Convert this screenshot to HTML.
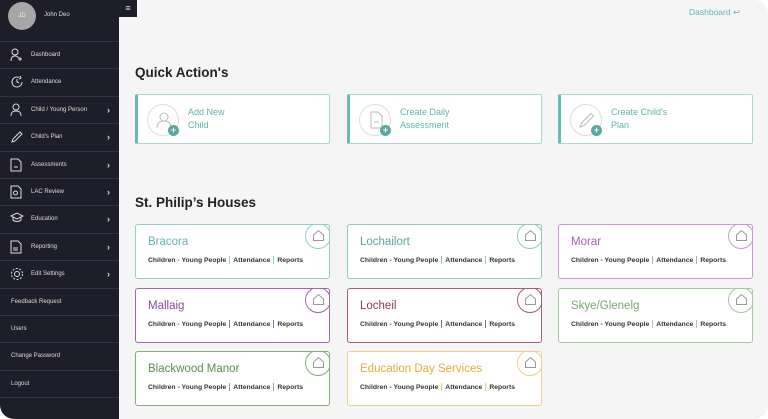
<!DOCTYPE html>
<html><head><meta charset="utf-8"><style>
*{margin:0;padding:0;box-sizing:border-box}
body{width:768px;height:419px;background:#fff;font-family:"Liberation Sans",sans-serif;position:relative;overflow:hidden}
.sb{position:absolute;left:0;top:0;width:119px;height:419px;background:#1e1d2a;border-radius:0 0 0 14px}
.tab{position:absolute;left:119px;top:0;width:18px;height:17px;background:#1e1d2a;color:#ddd;font-size:9px;text-align:center;line-height:16px}
.main{position:absolute;left:119px;top:0;width:649px;height:419px;background:#f5f5f5;border-radius:0 14px 14px 0}
.av{position:absolute;left:8px;top:2px;width:28px;height:28px;border-radius:50%;background:#a6a6a6;color:#eee;font-size:6px;text-align:center;line-height:28px}
.nm{position:absolute;left:44px;top:12px;color:#ddd;font-size:6px}
.it{position:absolute;left:0;width:119px;height:27.4px;border-top:1px solid #34334a;color:#ddd;font-size:6px;line-height:27px}
.it .t{position:absolute;left:31px}
.it .p{position:absolute;left:11px}
.it .c{position:absolute;right:9px;font-size:9px;font-weight:bold}
.it svg{position:absolute;left:10px;top:6px}
h2{position:absolute;left:135px;font-size:13.5px;font-weight:bold;color:#222}
.qa{position:absolute;width:195px;height:50px;background:#fff;border:1px solid #a9d8d3;border-left:3px solid #6bbab2;border-radius:2px}
.qa .ic{position:absolute;left:9px;top:9px;width:32px;height:32px;border-radius:50%;border:1px solid #ddd}
.qa .ic svg{position:absolute;left:7px;top:6px}
.qa .pl{position:absolute;left:30px;top:30px;width:11px;height:11px;border-radius:50%;background:#5aa9a1;color:#fff;font-size:9px;line-height:11px;text-align:center;font-weight:bold}
.qa .tx{position:absolute;left:50px;top:11px;color:#5fb5ad;font-size:9px;line-height:13px}
.hc{position:absolute;width:195px;height:55px;background:#fff;border:1px solid;border-radius:3px;overflow:hidden}
.hc .n{position:absolute;left:12px;top:11px;font-size:11.5px}
.hc .l{position:absolute;left:12px;top:31px;font-size:6.8px;font-weight:bold;color:#333;white-space:nowrap}
.hc .l i{font-style:normal;display:inline-block;width:1px;height:8px;vertical-align:-2px;margin:0 3px}
.hc .h{position:absolute;right:-2px;top:-2px;width:26px;height:26px;border-radius:50%;border:1px solid;background:#fff}
.hc .h svg{position:absolute;left:6px;top:5px}
</style></head><body>
<div class="main"></div>
<div class="sb">
<div class="av">JD</div><div class="nm">John Deo</div>
<div class="it" style="top:41px"><svg width="12" height="14" viewBox="0 0 12 14" fill="none" stroke="#ddd" stroke-width="1"><circle cx="5" cy="4" r="3"/><path d="M1 13c0-4 2-5 4-5s3 1 3.5 2M8 11h4M10 9v4"/></svg><span class="t">Dashboard</span></div>
<div class="it" style="top:68.4px"><svg width="14" height="14" viewBox="0 0 14 14" fill="none" stroke="#ddd" stroke-width="1"><path d="M12 7a5 5 0 1 1-3-4.6M7 4v3l2 1M10 1l1 2-2 1"/></svg><span class="t">Attendance</span></div>
<div class="it" style="top:95.8px"><svg width="12" height="14" viewBox="0 0 12 14" fill="none" stroke="#ddd" stroke-width="1"><circle cx="6" cy="4" r="3"/><path d="M1 13c0-4 2-5 5-5s5 1 5 5"/></svg><span class="t">Child / Young Person</span><span class="c">›</span></div>
<div class="it" style="top:123.2px"><svg width="14" height="14" viewBox="0 0 14 14" fill="none" stroke="#ddd" stroke-width="1"><path d="M2 12l1-3 7-7 2 2-7 7z"/></svg><span class="t">Child's Plan</span><span class="c">›</span></div>
<div class="it" style="top:150.6px"><svg width="12" height="14" viewBox="0 0 12 14" fill="none" stroke="#ddd" stroke-width="1"><path d="M1 1h7l3 3v9H1z M4 9h4"/></svg><span class="t">Assessments</span><span class="c">›</span></div>
<div class="it" style="top:178px"><svg width="12" height="14" viewBox="0 0 12 14" fill="none" stroke="#ddd" stroke-width="1"><path d="M1 1h7l3 3v9H1z"/><circle cx="5.5" cy="8" r="2"/></svg><span class="t">LAC Review</span><span class="c">›</span></div>
<div class="it" style="top:205.4px"><svg width="14" height="12" viewBox="0 0 14 12" fill="none" stroke="#ddd" stroke-width="1"><path d="M1 4l6-3 6 3-6 3zM3 5v3c2 2 6 2 8 0V5"/></svg><span class="t">Education</span><span class="c">›</span></div>
<div class="it" style="top:232.8px"><svg width="12" height="14" viewBox="0 0 12 14" fill="none" stroke="#ddd" stroke-width="1"><path d="M1 1h7l3 3v9H1zM3 8h5M3 10h5"/></svg><span class="t">Reporting</span><span class="c">›</span></div>
<div class="it" style="top:260.2px"><svg width="14" height="14" viewBox="0 0 14 14" fill="none" stroke="#ddd" stroke-width="1"><circle cx="7" cy="7" r="2.5"/><circle cx="7" cy="7" r="5.5" stroke-dasharray="2 1.5"/></svg><span class="t">Edit Settings</span><span class="c">›</span></div>
<div class="it" style="top:287.6px"><span class="p">Feedback Request</span></div>
<div class="it" style="top:315px"><span class="p">Users</span></div>
<div class="it" style="top:342.4px"><span class="p">Change Password</span></div>
<div class="it" style="top:369.8px;height:28px;border-bottom:1px solid #34334a"><span class="p">Logout</span></div>
</div>
<div class="tab">≡</div>
<div style="position:absolute;left:689px;top:7px;color:#5fb5ad;font-size:8.5px">Dashboard ↩</div>
<h2 style="top:65px">Quick Action's</h2>
<div class="qa" style="left:135px;top:94px"><div class="ic"><svg width="18" height="18" viewBox="0 0 18 18" fill="none" stroke="#bbb"><circle cx="9" cy="6" r="4"/><path d="M2 17c0-5 3-7 7-7s7 2 7 7"/></svg></div><div class="pl">+</div><div class="tx">Add New<br>Child</div></div>
<div class="qa" style="left:347px;top:94px"><div class="ic"><svg width="18" height="18" viewBox="0 0 18 18" fill="none" stroke="#bbb"><path d="M4 1h7l4 4v12H4zM7 11h5"/></svg></div><div class="pl">+</div><div class="tx">Create Daily<br>Assessment</div></div>
<div class="qa" style="left:558px;top:94px"><div class="ic"><svg width="18" height="18" viewBox="0 0 18 18" fill="none" stroke="#bbb"><path d="M2 16l1.5-4L13 2.5l2.5 2.5L6 14.5z"/></svg></div><div class="pl">+</div><div class="tx">Create Child's<br>Plan</div></div>
<h2 style="top:195px">St. Philip’s Houses</h2>

<div class="hc" style="left:135px;top:224px;border-color:#8fd0c8"><div class="n" style="color:#5fb5ad">Bracora</div><div class="l">Children - Young People<i style="background:#8fd0c8"></i>Attendance<i style="background:#8fd0c8"></i>Reports</div><div class="h" style="border-color:#8fd0c8"><svg width="13" height="13" viewBox="0 0 13 13" fill="none" stroke="#999"><path d="M1.5 6L6.5 1.5 11.5 6V11.5H1.5z"/></svg></div></div>
<div class="hc" style="left:347px;top:224px;border-color:#8fcac3"><div class="n" style="color:#5aa39b">Lochailort</div><div class="l">Children - Young People<i style="background:#8fcac3"></i>Attendance<i style="background:#8fcac3"></i>Reports</div><div class="h" style="border-color:#8fcac3"><svg width="13" height="13" viewBox="0 0 13 13" fill="none" stroke="#999"><path d="M1.5 6L6.5 1.5 11.5 6V11.5H1.5z"/></svg></div></div>
<div class="hc" style="left:558px;top:224px;border-color:#c99bd3"><div class="n" style="color:#a363b6">Morar</div><div class="l">Children - Young People<i style="background:#c99bd3"></i>Attendance<i style="background:#c99bd3"></i>Reports</div><div class="h" style="border-color:#c99bd3"><svg width="13" height="13" viewBox="0 0 13 13" fill="none" stroke="#999"><path d="M1.5 6L6.5 1.5 11.5 6V11.5H1.5z"/></svg></div></div>

<div class="hc" style="left:135px;top:288px;border-color:#9d6aad"><div class="n" style="color:#8a4c9c">Mallaig</div><div class="l">Children - Young People<i style="background:#9d6aad"></i>Attendance<i style="background:#9d6aad"></i>Reports</div><div class="h" style="border-color:#9d6aad"><svg width="13" height="13" viewBox="0 0 13 13" fill="none" stroke="#999"><path d="M1.5 6L6.5 1.5 11.5 6V11.5H1.5z"/></svg></div></div>
<div class="hc" style="left:347px;top:288px;border-color:#a06078"><div class="n" style="color:#8b3a56">Locheil</div><div class="l">Children - Young People<i style="background:#a06078"></i>Attendance<i style="background:#a06078"></i>Reports</div><div class="h" style="border-color:#a06078"><svg width="13" height="13" viewBox="0 0 13 13" fill="none" stroke="#999"><path d="M1.5 6L6.5 1.5 11.5 6V11.5H1.5z"/></svg></div></div>
<div class="hc" style="left:558px;top:288px;border-color:#a6c8a0"><div class="n" style="color:#7aa872">Skye/Glenelg</div><div class="l">Children - Young People<i style="background:#a6c8a0"></i>Attendance<i style="background:#a6c8a0"></i>Reports</div><div class="h" style="border-color:#a6c8a0"><svg width="13" height="13" viewBox="0 0 13 13" fill="none" stroke="#999"><path d="M1.5 6L6.5 1.5 11.5 6V11.5H1.5z"/></svg></div></div>

<div class="hc" style="left:135px;top:351px;border-color:#86ad7c"><div class="n" style="color:#5e8c52">Blackwood Manor</div><div class="l">Children - Young People<i style="background:#86ad7c"></i>Attendance<i style="background:#86ad7c"></i>Reports</div><div class="h" style="border-color:#86ad7c"><svg width="13" height="13" viewBox="0 0 13 13" fill="none" stroke="#999"><path d="M1.5 6L6.5 1.5 11.5 6V11.5H1.5z"/></svg></div></div>
<div class="hc" style="left:347px;top:351px;border-color:#efd08a"><div class="n" style="color:#e3ac3c">Education Day Services</div><div class="l">Children - Young People<i style="background:#efd08a"></i>Attendance<i style="background:#efd08a"></i>Reports</div><div class="h" style="border-color:#efd08a"><svg width="13" height="13" viewBox="0 0 13 13" fill="none" stroke="#999"><path d="M1.5 6L6.5 1.5 11.5 6V11.5H1.5z"/></svg></div></div>
</body></html>
